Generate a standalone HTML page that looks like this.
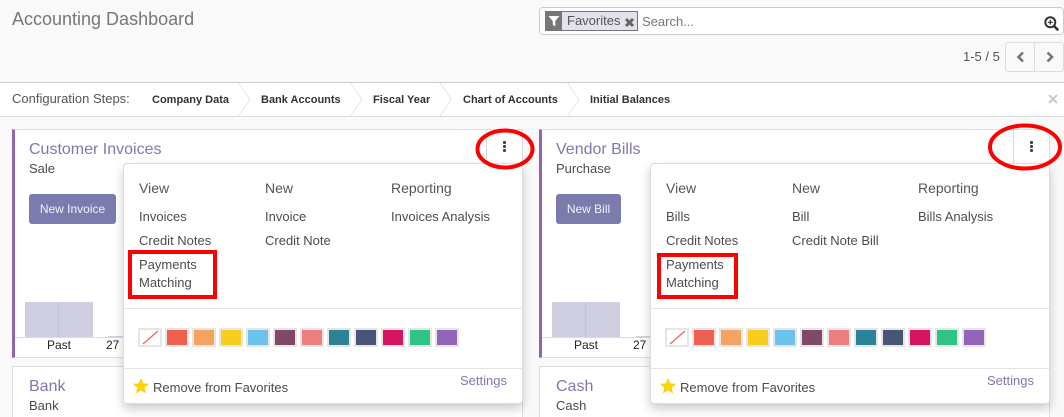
<!DOCTYPE html>
<html>
<head>
<meta charset="utf-8">
<style>
html,body{margin:0;padding:0;width:1064px;height:417px;overflow:hidden;}
body{background:#f9f9f9;position:relative;font-family:"Liberation Sans",sans-serif;font-size:13px;color:#4c4c4c;}
.a{position:absolute;white-space:nowrap;line-height:16px;}
.box{position:absolute;box-sizing:border-box;}
.card{position:absolute;box-sizing:border-box;background:#fff;border:1px solid #ddd;}
.t{color:#7c7bad;font-size:16px;line-height:20px;}
.h{font-size:14px;color:#555;line-height:18px;}
.step{font-weight:bold;font-size:11px;color:#333;}
.sw{position:absolute;box-sizing:border-box;width:24px;height:19px;top:328px;border:2px solid #e6e6e6;}
.sw i{display:block;width:100%;height:100%;}
.drop{position:absolute;box-sizing:border-box;background:#fff;border:1px solid #ddd;border-radius:4px;box-shadow:0 5px 10px rgba(0,0,0,.2);}
.btn{position:absolute;box-sizing:border-box;background:#7c7bad;color:#f2f2f7;border-radius:3px;height:30px;line-height:30px;text-align:center;font-size:12px;top:194px;}
.dot{position:absolute;width:3px;height:3px;border-radius:1px;background:#444;}
.n{font-size:12px;color:#222;}
</style>
</head>
<body>
<div class="a" style="left:12px;top:8px;font-size:18px;line-height:22px;color:#777;">Accounting Dashboard</div>

<div class="box" style="left:539px;top:7px;width:525px;height:28px;background:#fff;border:1px solid #ccc;border-radius:4px;"></div>
<div class="box" style="left:545px;top:11px;width:93px;height:20px;background:#e2e2ec;border:1px solid #777;"></div>
<div class="box" style="left:545px;top:11px;width:17px;height:20px;background:#777;"></div>
<svg style="position:absolute;left:548px;top:15px;" width="12" height="12" viewBox="0 0 12 12"><path d="M0.5 1H11.5L7.3 6V11.5L4.7 9.5V6Z" fill="#fff"/></svg>
<div class="a" style="left:567px;top:13px;color:#555;">Favorites</div>
<svg style="position:absolute;left:624px;top:17px;" width="11" height="11" viewBox="0 0 11 11"><path d="M2 2L9 9M9 2L2 9" stroke="#666" stroke-width="3"/></svg>
<div class="a" style="left:642px;top:14px;color:#777;">Search...</div>
<svg style="position:absolute;left:1044px;top:16px;" width="15" height="15" viewBox="0 0 15 15"><circle cx="6.3" cy="6.3" r="5" fill="none" stroke="#333" stroke-width="2"/><path d="M10 10L14.2 14.2" stroke="#333" stroke-width="2.6"/><path d="M3.8 6.3H8.8M6.3 3.8V8.8" stroke="#333" stroke-width="1.2"/></svg>

<div class="a" style="left:963px;top:49px;color:#555;">1-5 / 5</div>
<div class="box" style="left:1005px;top:42px;width:59px;height:30px;border:1px solid #ddd;border-radius:3px;background:#f9f9f9;"></div>
<div class="box" style="left:1034px;top:42px;width:1px;height:30px;background:#ddd;"></div>
<svg style="position:absolute;left:1016px;top:51px;" width="10" height="12" viewBox="0 0 10 12"><path d="M7 1.5L2.5 6L7 10.5" fill="none" stroke="#777" stroke-width="2.6"/></svg>
<svg style="position:absolute;left:1045px;top:51px;" width="10" height="12" viewBox="0 0 10 12"><path d="M2.5 1.5L7 6L2.5 10.5" fill="none" stroke="#777" stroke-width="2.6"/></svg>

<div class="box" style="left:0;top:82px;width:1064px;height:35px;background:#fff;border-top:1px solid #ccc;border-bottom:1px solid #ddd;"></div>
<div class="a" style="left:12px;top:91px;color:#555;">Configuration Steps:</div>
<div class="a step" style="left:152px;top:92px;">Company Data</div>
<div class="a step" style="left:261px;top:92px;">Bank Accounts</div>
<div class="a step" style="left:373px;top:92px;">Fiscal Year</div>
<div class="a step" style="left:463px;top:92px;">Chart of Accounts</div>
<div class="a step" style="left:590px;top:92px;">Initial Balances</div>
<svg style="position:absolute;left:230px;top:83px;" width="360" height="33" viewBox="0 0 360 33" fill="none" stroke="#e6e6e6"><path d="M8.5 0L20 16.5L8.5 33M120.5 0L132 16.5L120.5 33M210 0L221.5 16.5L210 33M337.5 0L349 16.5L337.5 33"/></svg>
<svg style="position:absolute;left:1048px;top:94px;" width="10" height="10" viewBox="0 0 10 10"><path d="M1 1L9 9M9 1L1 9" stroke="#ccc" stroke-width="2.2"/></svg>

<!-- Card 1 -->
<div class="card" style="left:12px;top:129px;width:511px;height:229px;border-left:3px solid #8f65b3;"></div>
<div class="a t" style="left:29px;top:140px;">Customer Invoices</div>
<div class="a" style="left:29px;top:161px;">Sale</div>
<div class="btn" style="left:29px;width:87px;">New Invoice</div>
<div class="box" style="left:25px;top:302px;width:68px;height:35px;background:#cfcfe1;"></div>
<div class="box" style="left:58px;top:302px;width:1px;height:35px;background:#c2c2d6;"></div>
<div class="box" style="left:108px;top:336px;width:16px;height:1px;background:#cfcfe1;"></div>
<div class="box" style="left:15px;top:337px;width:110px;height:1px;background:#ddd;"></div>
<div class="a n" style="left:47px;top:337px;">Past</div>
<div class="a n" style="left:106px;top:337px;">27</div>

<!-- Card Bank -->
<div class="card" style="left:12px;top:366px;width:511px;height:51px;border-bottom:none;"></div>
<div class="a t" style="left:29px;top:377px;">Bank</div>
<div class="a" style="left:29px;top:398px;">Bank</div>

<!-- Card 2 -->
<div class="card" style="left:539px;top:129px;width:511px;height:229px;border-left:3px solid #8f65b3;"></div>
<div class="a t" style="left:556px;top:140px;">Vendor Bills</div>
<div class="a" style="left:556px;top:161px;">Purchase</div>
<div class="btn" style="left:556px;width:65px;">New Bill</div>
<div class="box" style="left:552px;top:302px;width:68px;height:35px;background:#cfcfe1;"></div>
<div class="box" style="left:585px;top:302px;width:1px;height:35px;background:#c2c2d6;"></div>
<div class="box" style="left:636px;top:336px;width:15px;height:1px;background:#cfcfe1;"></div>
<div class="box" style="left:542px;top:337px;width:110px;height:1px;background:#ddd;"></div>
<div class="a n" style="left:574px;top:337px;">Past</div>
<div class="a n" style="left:633px;top:337px;">27</div>

<!-- Card Cash -->
<div class="card" style="left:539px;top:366px;width:511px;height:51px;border-bottom:none;"></div>
<div class="a t" style="left:556px;top:377px;">Cash</div>
<div class="a" style="left:556px;top:398px;">Cash</div>

<!-- Kebab cells -->
<div class="box" style="left:486px;top:129px;width:37px;height:35px;background:#fff;border:1px solid #ddd;"></div>
<div class="box" style="left:1013px;top:129px;width:37px;height:35px;background:#fff;border:1px solid #ddd;"></div>
<div class="dot" style="left:503px;top:141px;"></div>
<div class="dot" style="left:503px;top:145px;"></div>
<div class="dot" style="left:503px;top:149px;"></div>
<div class="dot" style="left:1030px;top:141px;"></div>
<div class="dot" style="left:1030px;top:145px;"></div>
<div class="dot" style="left:1030px;top:149px;"></div>

<!-- Dropdown 1 -->
<div class="drop" style="left:123px;top:163px;width:400px;height:241px;"></div>
<div class="box" style="left:124px;top:308px;width:398px;height:1px;background:#e4e4e4;"></div>
<div class="box" style="left:124px;top:368px;width:398px;height:1px;background:#e4e4e4;"></div>
<div class="a h" style="left:139px;top:179px;">View</div>
<div class="a h" style="left:265px;top:179px;">New</div>
<div class="a h" style="left:391px;top:179px;">Reporting</div>
<div class="a" style="left:139px;top:209px;">Invoices</div>
<div class="a" style="left:139px;top:233px;">Credit Notes</div>
<div class="a" style="left:139px;top:257px;">Payments</div>
<div class="a" style="left:139px;top:275px;">Matching</div>
<div class="a" style="left:265px;top:209px;">Invoice</div>
<div class="a" style="left:265px;top:233px;">Credit Note</div>
<div class="a" style="left:391px;top:209px;">Invoices Analysis</div>
<div class="box" style="left:128px;top:250px;width:89px;height:49px;border:4px solid #f00;"></div>

<div class="sw" style="left:138px;background:#fff;"></div>
<svg style="position:absolute;left:140px;top:330px;" width="20" height="15" viewBox="0 0 20 15"><path d="M3 14L18 1" stroke="#f0605a" stroke-width="1.2"/></svg>
<div class="sw" style="left:165px;"><i style="background:#f06050"></i></div>
<div class="sw" style="left:192px;"><i style="background:#f4a460"></i></div>
<div class="sw" style="left:219px;"><i style="background:#f7cd1f"></i></div>
<div class="sw" style="left:246px;"><i style="background:#6cc1ed"></i></div>
<div class="sw" style="left:273px;"><i style="background:#814968"></i></div>
<div class="sw" style="left:300px;"><i style="background:#eb7e7f"></i></div>
<div class="sw" style="left:327px;"><i style="background:#2c8397"></i></div>
<div class="sw" style="left:354px;"><i style="background:#475577"></i></div>
<div class="sw" style="left:381px;"><i style="background:#d6145f"></i></div>
<div class="sw" style="left:408px;"><i style="background:#30c381"></i></div>
<div class="sw" style="left:435px;"><i style="background:#9365b8"></i></div>

<svg style="position:absolute;left:133px;top:378px;" width="16" height="16" viewBox="0 0 16 16"><path d="M8 1L10.1 5.7L15 6.2L11.3 9.6L12.4 14.6L8 12L3.6 14.6L4.7 9.6L1 6.2L5.9 5.7Z" fill="#fcd20a" stroke="#fcd20a" stroke-width=".8"/></svg>
<div class="a" style="left:153px;top:380px;">Remove from Favorites</div>
<div class="a" style="left:460px;top:373px;color:#7c7bad;">Settings</div>

<!-- Dropdown 2 -->
<div class="drop" style="left:650px;top:163px;width:400px;height:241px;"></div>
<div class="box" style="left:651px;top:308px;width:398px;height:1px;background:#e4e4e4;"></div>
<div class="box" style="left:651px;top:368px;width:398px;height:1px;background:#e4e4e4;"></div>
<div class="a h" style="left:666px;top:179px;">View</div>
<div class="a h" style="left:792px;top:179px;">New</div>
<div class="a h" style="left:918px;top:179px;">Reporting</div>
<div class="a" style="left:666px;top:209px;">Bills</div>
<div class="a" style="left:666px;top:233px;">Credit Notes</div>
<div class="a" style="left:666px;top:257px;">Payments</div>
<div class="a" style="left:666px;top:275px;">Matching</div>
<div class="a" style="left:792px;top:209px;">Bill</div>
<div class="a" style="left:792px;top:233px;">Credit Note Bill</div>
<div class="a" style="left:918px;top:209px;">Bills Analysis</div>
<div class="box" style="left:657px;top:253px;width:81px;height:46px;border:4px solid #f00;"></div>

<div class="sw" style="left:665px;background:#fff;"></div>
<svg style="position:absolute;left:667px;top:330px;" width="20" height="15" viewBox="0 0 20 15"><path d="M3 14L18 1" stroke="#f0605a" stroke-width="1.2"/></svg>
<div class="sw" style="left:692px;"><i style="background:#f06050"></i></div>
<div class="sw" style="left:719px;"><i style="background:#f4a460"></i></div>
<div class="sw" style="left:746px;"><i style="background:#f7cd1f"></i></div>
<div class="sw" style="left:773px;"><i style="background:#6cc1ed"></i></div>
<div class="sw" style="left:800px;"><i style="background:#814968"></i></div>
<div class="sw" style="left:827px;"><i style="background:#eb7e7f"></i></div>
<div class="sw" style="left:854px;"><i style="background:#2c8397"></i></div>
<div class="sw" style="left:881px;"><i style="background:#475577"></i></div>
<div class="sw" style="left:908px;"><i style="background:#d6145f"></i></div>
<div class="sw" style="left:935px;"><i style="background:#30c381"></i></div>
<div class="sw" style="left:962px;"><i style="background:#9365b8"></i></div>

<svg style="position:absolute;left:660px;top:378px;" width="16" height="16" viewBox="0 0 16 16"><path d="M8 1L10.1 5.7L15 6.2L11.3 9.6L12.4 14.6L8 12L3.6 14.6L4.7 9.6L1 6.2L5.9 5.7Z" fill="#fcd20a" stroke="#fcd20a" stroke-width=".8"/></svg>
<div class="a" style="left:680px;top:380px;">Remove from Favorites</div>
<div class="a" style="left:987px;top:373px;color:#7c7bad;">Settings</div>

<!-- Red ellipses -->
<svg style="position:absolute;left:0;top:0;pointer-events:none;" width="1064" height="417" fill="none" stroke="#f00" stroke-width="4"><ellipse cx="505" cy="149" rx="27.5" ry="18.5"/><ellipse cx="1025" cy="147" rx="35" ry="21.5"/></svg>
</body>
</html>
